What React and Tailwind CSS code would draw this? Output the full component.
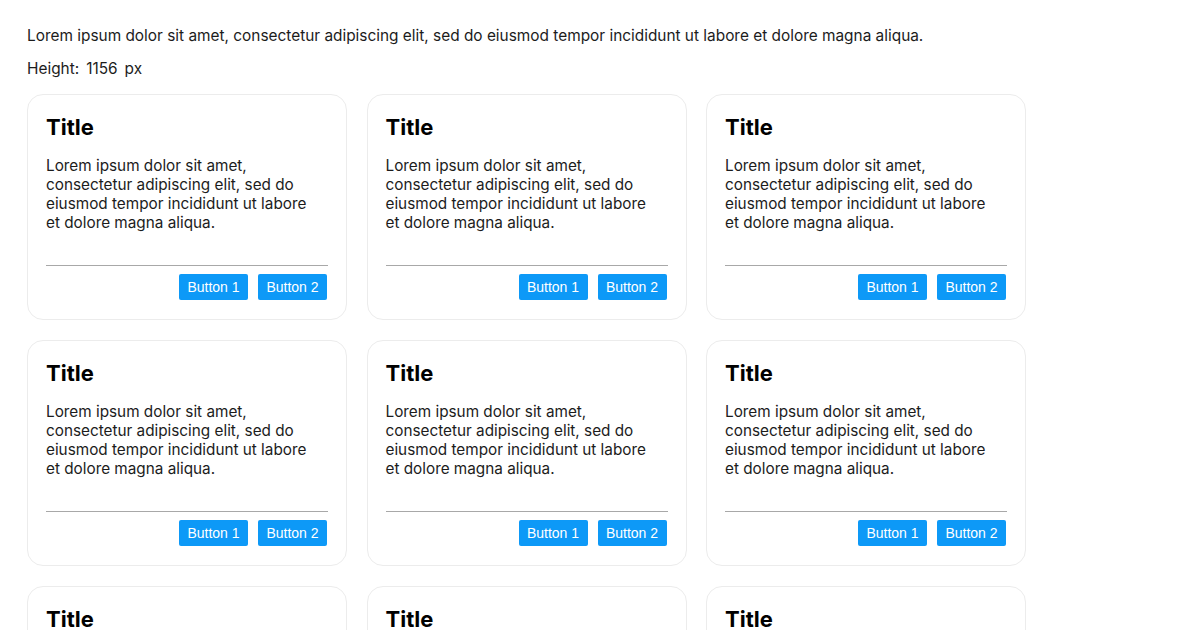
import React from 'react';

const Card = () => (
  <div className="flex flex-col rounded-2xl border border-[#ececec] bg-white px-[18px] pt-[17px] pb-[19px] h-[226px]">
    <h2 className="text-[22px] font-bold leading-[30px] text-black">Title</h2>
    <p className="mt-[14px] text-[15.3px] leading-[19px] text-[#1c1c1c] pr-3">
      Lorem ipsum dolor sit amet, consectetur adipiscing elit, sed do eiusmod tempor incididunt ut labore et dolore magna aliqua.
    </p>
    <div className="mt-auto border-t border-[#a8a8a8] pt-2 flex justify-end gap-[10px] pr-[1px]">
      <button className="h-[26px] w-[69px] rounded-[2px] bg-[#0d99f7] text-white text-[14px] font-['Liberation_Sans',Arial,sans-serif]">
        Button 1
      </button>
      <button className="h-[26px] w-[69px] rounded-[2px] bg-[#0d99f7] text-white text-[14px] font-['Liberation_Sans',Arial,sans-serif]">
        Button 2
      </button>
    </div>
  </div>
);

export default function App() {
  return (
    <div className="min-h-screen bg-white px-[27px] pt-[24px] font-['Inter',sans-serif] text-[#1c1c1c]">
      <p className="text-[15.4px] leading-[24px]">
        Lorem ipsum dolor sit amet, consectetur adipiscing elit, sed do eiusmod tempor incididunt ut labore et dolore magna aliqua.
      </p>
      <p className="mt-[9px] text-[15.4px] leading-[24px] flex gap-[7px]">
        <span>Height:</span>
        <span>1156</span>
        <span>px</span>
      </p>
      <div className="mt-[13px] grid grid-cols-[repeat(3,320px)] gap-x-[19.5px] gap-y-5">
        {Array.from({ length: 9 }).map((_, i) => (
          <Card key={i} />
        ))}
      </div>
    </div>
  );
}
